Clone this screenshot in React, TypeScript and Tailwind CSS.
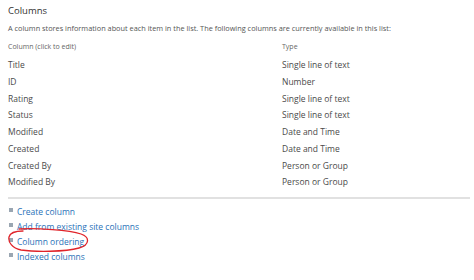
import React from 'react';

const rows: [string, string][] = [
    ['Title', 'Single line of text'],
    ['ID', 'Number'],
    ['Rating', 'Single line of text'],
    ['Status', 'Single line of text'],
    ['Modified', 'Date and Time'],
    ['Created', 'Date and Time'],
    ['Created By', 'Person or Group'],
    ['Modified By', 'Person or Group'],
];

const links = ['Create column', 'Add from existing site columns', 'Column ordering', 'Indexed columns'];

const App: React.FC = () => {
    return (
        <div className="w-[474px] h-[280px] bg-white overflow-hidden text-[#444]" style={{ fontFamily: '"Open Sans", "Noto Sans", sans-serif' }}>
            <div className="pl-[8px] pt-[4px]">
                <h2 className="text-[9.5px] leading-[14px] text-[#333]">Columns</h2>
                <p className="mt-[4px] text-[7.35px] leading-[12px] text-[#555]">
                    A column stores information about each item in the list. The following columns are currently available in this list:
                </p>
                <div className="mt-[7px] w-[462px]">
                    <div className="grid grid-cols-[274px_1fr] text-[7px] leading-[12px] text-[#666]">
                        <span>Column (click to edit)</span>
                        <span>Type</span>
                    </div>
                    <div className="mt-[4px] flex flex-col">
                        {rows.map(([name, type]) => (
                            <div key={name} className="grid grid-cols-[274px_1fr] text-[8.5px] leading-[16.75px] text-[#4a4a4a]">
                                <span>{name}</span>
                                <span>{type}</span>
                            </div>
                        ))}
                    </div>
                    <div className="mt-[6px] h-[2px] bg-[#e1e1e1]" />
                </div>
                <ul className="relative mt-[5px] flex flex-col">
                    {links.map((l) => (
                        <li key={l} className="flex items-center gap-[4px] text-[8.5px] leading-[15px] text-[#2a72b8]">
                            <span className="ml-[1px] w-[4px] h-[4px] bg-[#9aa6b2] -mt-[4px]" />
                            <span>{l}</span>
                        </li>
                    ))}
                    <svg className="absolute left-[-1px] top-[24px] w-[82px] h-[25px]" viewBox="0 0 82 25" fill="none">
                        <path
                            d="M12 1 C 30 0, 62 2, 74 6 C 83 9, 83 17, 72 20 C 58 24, 28 24, 14 22 C 5 20, 1 14, 2 9 C 3 5, 8 3, 16 3"
                            stroke="#e0242a"
                            strokeWidth="1.3"
                            strokeLinecap="round"
                        />
                    </svg>
                </ul>
            </div>
        </div>
    );
};

export default App;
